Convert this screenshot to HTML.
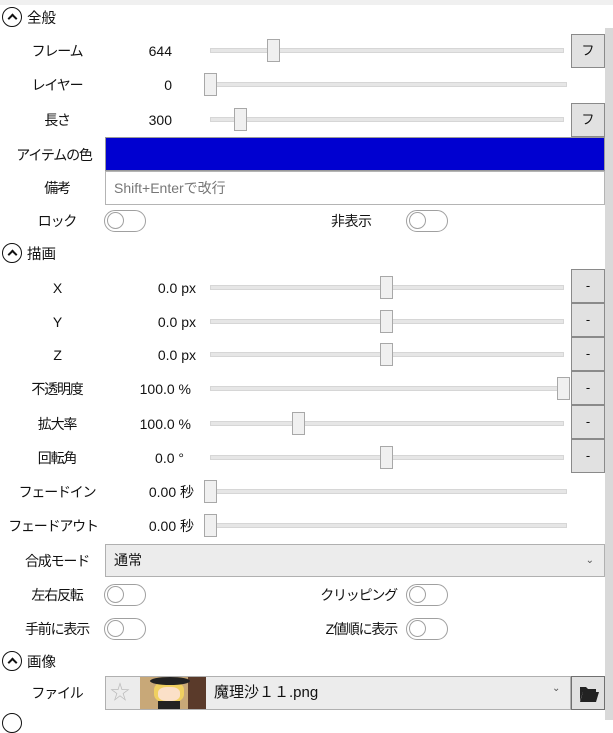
<!DOCTYPE html>
<html><head><meta charset="utf-8"><style>
*{margin:0;padding:0;box-sizing:border-box}
body{width:613px;height:720px;overflow:hidden;background:#fff;position:relative;font-family:"Liberation Sans","Noto Sans CJK JP",sans-serif;font-size:14px;color:#111}
.a{position:absolute}
.lbl{position:absolute;width:114px;text-align:center;line-height:20px;letter-spacing:-1.2px}
.val{position:absolute;text-align:right;line-height:20px}
.tr{position:absolute;height:5px;background:#e6e6e6;border:1px solid #d6d6d6}
.th{position:absolute;width:13px;height:23px;background:#f0f0f0;border:1px solid #a8a8a8}
.btn{position:absolute;left:571px;width:34px;height:34px;background:#e1e1e1;border:1px solid #8a8a8a;text-align:center;line-height:32px;font-size:13px}
.tg{position:absolute;width:42px;height:22px;border:1.5px solid #a0a0a0;border-radius:11px;background:#fff}
.tg::after{content:"";position:absolute;left:2px;top:1px;width:17px;height:17px;border-radius:50%;border:1.5px solid #a0a0a0;box-sizing:border-box}
.hd{position:absolute;left:2px;line-height:20px;font-size:14.5px}
.hd i{display:inline-block;width:20px;height:20px;border:1.6px solid #111;border-radius:50%;vertical-align:middle;margin-right:5px;position:relative;top:-2px}
.hd i::after{content:"";position:absolute;left:5.5px;top:6.5px;width:5px;height:5px;border-left:2.3px solid #111;border-top:2.3px solid #111;transform:rotate(45deg)}
.rl{position:absolute;right:216px;line-height:20px;letter-spacing:-1.2px}
</style></head><body>
<div class="a" style="left:0;top:0;width:613px;height:5px;background:#f0f0f0"></div>
<div class="a" style="left:605px;top:28px;width:8px;height:692px;background:#d9d9d9"></div>

<div class="hd" style="top:9px"><i></i>全般</div>
<div class="lbl" style="left:0;top:41px">フレーム</div><div class="val" style="left:120px;width:52px;top:41px">644</div>
<div class="tr" style="left:210px;top:48px;width:354px"></div><div class="th" style="left:267px;top:39px"></div>
<div class="btn" style="top:34px">フ</div>
<div class="lbl" style="left:0;top:75px">レイヤー</div><div class="val" style="left:120px;width:52px;top:75px">0</div>
<div class="tr" style="left:210px;top:82px;width:357px"></div><div class="th" style="left:204px;top:73px"></div>
<div class="lbl" style="left:0;top:110px">長さ</div><div class="val" style="left:120px;width:52px;top:110px">300</div>
<div class="tr" style="left:210px;top:117px;width:354px"></div><div class="th" style="left:234px;top:108px"></div>
<div class="btn" style="top:103px">フ</div>
<div class="lbl" style="left:-3px;top:145px">アイテムの色</div>
<div class="a" style="left:105px;top:137px;width:500px;height:34px;background:#0000d0;border:1px solid #9a9a9a"></div>
<div class="lbl" style="left:0;top:178px">備考</div>
<div class="a" style="left:105px;top:171px;width:500px;height:34px;border:1px solid #b4b4b4;color:#777;padding-left:8px;line-height:32px">Shift+Enterで改行</div>
<div class="lbl" style="left:0;top:211px">ロック</div><div class="tg" style="left:104px;top:210px"></div>
<div class="a" style="left:331px;top:211px;line-height:20px;letter-spacing:-0.5px">非表示</div><div class="tg" style="left:406px;top:210px"></div>

<div class="hd" style="top:245px"><i></i>描画</div>
<div class="lbl" style="left:0;top:278px">X</div><div class="val" style="left:120px;width:76px;top:278px">0.0 px</div>
<div class="tr" style="left:210px;top:285px;width:354px"></div><div class="th" style="left:380px;top:276px"></div>
<div class="lbl" style="left:0;top:312px">Y</div><div class="val" style="left:120px;width:76px;top:312px">0.0 px</div>
<div class="tr" style="left:210px;top:319px;width:354px"></div><div class="th" style="left:380px;top:310px"></div>
<div class="lbl" style="left:0;top:345px">Z</div><div class="val" style="left:120px;width:76px;top:345px">0.0 px</div>
<div class="tr" style="left:210px;top:352px;width:354px"></div><div class="th" style="left:380px;top:343px"></div>
<div class="lbl" style="left:0;top:379px">不透明度</div><div class="val" style="left:120px;width:71px;top:379px">100.0 %</div>
<div class="tr" style="left:210px;top:386px;width:354px"></div><div class="th" style="left:557px;top:377px"></div>
<div class="lbl" style="left:0;top:414px">拡大率</div><div class="val" style="left:120px;width:71px;top:414px">100.0 %</div>
<div class="tr" style="left:210px;top:421px;width:354px"></div><div class="th" style="left:292px;top:412px"></div>
<div class="lbl" style="left:0;top:448px">回転角</div><div class="val" style="left:120px;width:64px;top:448px">0.0 °</div>
<div class="tr" style="left:210px;top:455px;width:354px"></div><div class="th" style="left:380px;top:446px"></div>
<div class="btn" style="top:269px">-</div><div class="btn" style="top:303px">-</div><div class="btn" style="top:337px">-</div>
<div class="btn" style="top:371px">-</div><div class="btn" style="top:405px">-</div><div class="btn" style="top:439px">-</div>
<div class="lbl" style="left:0;top:482px">フェードイン</div><div class="val" style="left:120px;width:74px;top:482px">0.00 秒</div>
<div class="tr" style="left:210px;top:489px;width:357px"></div><div class="th" style="left:204px;top:480px"></div>
<div class="lbl" style="left:-4px;top:516px">フェードアウト</div><div class="val" style="left:120px;width:74px;top:516px">0.00 秒</div>
<div class="tr" style="left:210px;top:523px;width:357px"></div><div class="th" style="left:204px;top:514px"></div>
<div class="lbl" style="left:0;top:551px">合成モード</div>
<div class="a" style="left:105px;top:544px;width:500px;height:33px;background:#ececec;border:1px solid #b0b0b0;padding-left:8px;line-height:31px">通常<span style="position:absolute;right:10px;font-size:10px;color:#555">&#8964;</span></div>
<div class="lbl" style="left:0;top:585px">左右反転</div><div class="tg" style="left:104px;top:584px"></div>
<div class="rl" style="top:585px">クリッピング</div><div class="tg" style="left:406px;top:584px"></div>
<div class="lbl" style="left:0;top:619px">手前に表示</div><div class="tg" style="left:104px;top:618px"></div>
<div class="rl" style="top:619px">Z値順に表示</div><div class="tg" style="left:406px;top:618px"></div>

<div class="hd" style="top:653px"><i></i>画像</div>
<div class="lbl" style="left:0;top:683px">ファイル</div>
<div class="a" style="left:105px;top:676px;width:466px;height:34px;background:#ececec;border:1px solid #b0b0b0"></div>
<div class="a" style="left:110px;top:680px;font-size:20px;color:#bbb;line-height:26px">☆</div>
<div class="a" style="left:140px;top:677px;width:66px;height:32px;background:#c8a878;overflow:hidden">
 <div class="a" style="left:48px;top:0;width:18px;height:32px;background:#5a3a2a"></div>
 <div class="a" style="left:14px;top:4px;width:30px;height:22px;background:#f0d060;border-radius:40%"></div>
 <div class="a" style="left:18px;top:10px;width:22px;height:14px;background:#fbe0c8;border-radius:40%"></div>
 <div class="a" style="left:10px;top:0;width:40px;height:8px;background:#222;border-radius:50%"></div>
 <div class="a" style="left:18px;top:24px;width:22px;height:8px;background:#222"></div>
</div>
<div class="a" style="left:214px;top:683px;line-height:20px;font-size:15px">魔理沙１１.png</div>
<div class="a" style="left:552px;top:683px;font-size:10px;color:#555">&#8964;</div>
<div class="a" style="left:571px;top:676px;width:34px;height:34px;background:#e1e1e1;border:1px solid #707070">
 <svg width="32" height="32" viewBox="0 0 32 32"><path d="M8 10h6l2 2h8v3H11l-3 9z" fill="#222"/><path d="M11 15h16l-3 10H8z" fill="#222"/></svg>
</div>
<div class="a" style="left:2px;top:713px;width:20px;height:20px;border:1.6px solid #111;border-radius:50%"></div>
</body></html>
